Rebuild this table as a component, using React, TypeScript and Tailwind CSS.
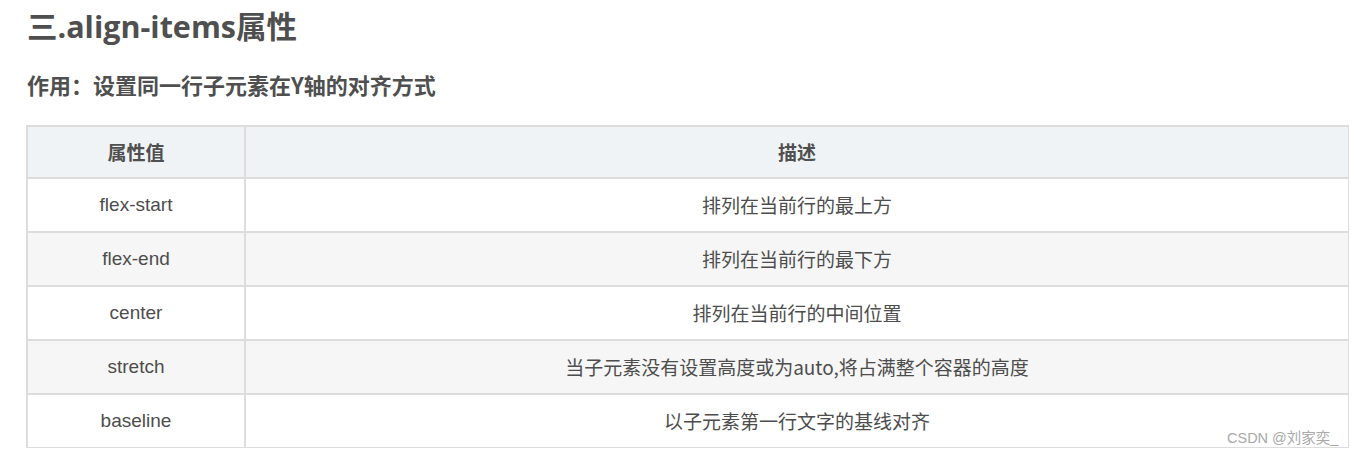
import React from 'react';

const rows = [
  { value: 'flex-start', desc: '排列在当前行的最上方' },
  { value: 'flex-end', desc: '排列在当前行的最下方' },
  { value: 'center', desc: '排列在当前行的中间位置' },
  { value: 'stretch', desc: '当子元素没有设置高度或为auto,将占满整个容器的高度' },
  { value: 'baseline', desc: '以子元素第一行文字的基线对齐' },
];

const App = () => {
  return (
    <div
      className="relative w-[1356px] h-[455px] bg-white overflow-hidden pl-[27px] pr-[7px]"
      style={{ fontFamily: '"Liberation Sans", "Noto Sans CJK SC", sans-serif' }}
    >
      <h1 className="pt-[3px] h-[52px] text-[30.5px] leading-[46px] font-bold text-[#4f4f4f] [font-family:'Open_Sans','Noto_Sans_CJK_SC',sans-serif]">
        三.align-items属性
      </h1>
      <h3 className="mt-[17px] h-[32px] text-[22px] leading-[30px] font-bold text-[#4f4f4f] [font-family:'Noto_Sans_CJK_SC',sans-serif]">
        作用：设置同一行子元素在Y轴的对齐方式
      </h3>

      {/* table */}
      <div className="mt-[24px] -ml-px w-[1323px] border-l-2 border-t-2 border-r border-b border-[#dddddd] text-[19px] text-[#4d4d4d]">
        <div className="grid grid-cols-[218px_1fr] h-[52px] bg-[#eff3f5] border-b-2 border-[#dddddd] font-bold text-[#4f4f4f] [font-family:'Noto_Sans_CJK_SC',sans-serif] text-[19px]">
          <div className="flex items-center justify-center border-r-2 border-[#dddddd]">属性值</div>
          <div className="flex items-center justify-center">描述</div>
        </div>
        {rows.map((row, i) => {
          const last = i === rows.length - 1;
          return (
            <div
              key={row.value}
              className={`grid grid-cols-[218px_1fr] ${last ? 'h-[52px]' : 'h-[54px] border-b-2 border-[#dddddd]'} ${
                i % 2 === 1 ? 'bg-[#f6f6f6]' : 'bg-white'
              }`}
            >
              <div className="flex items-center justify-center border-r-2 border-[#dddddd] text-[#4d4d4d]">
                {row.value}
              </div>
              <div className="flex items-center justify-center text-[#4d4d4d] text-[19px] [font-family:'Noto_Sans_CJK_SC',sans-serif] font-normal">
                {row.desc}
              </div>
            </div>
          );
        })}
      </div>

      {/* watermark */}
      <div className="absolute left-[1227px] top-[428px] text-[14.5px] text-[#a9a9a9] [font-family:'Liberation_Sans','Noto_Sans_CJK_SC',sans-serif]">
        CSDN @刘家奕_
      </div>
    </div>
  );
};

export default App;
